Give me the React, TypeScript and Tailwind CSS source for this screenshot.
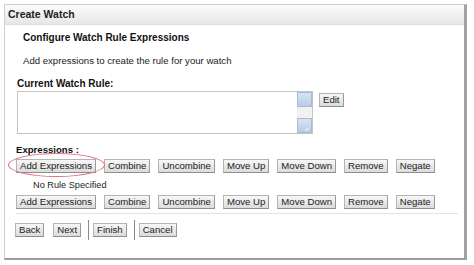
import React from "react";

const FONT = { fontFamily: '"Liberation Sans", Arial, sans-serif' };

function Btn({ label, className = "" }: { label: string; className?: string }) {
  return (
    <button
      className={`block h-[14px] shrink-0 border border-[#b4b4b4] border-b-[#8e8e8e] border-r-[#9a9a9a] bg-gradient-to-b from-[#f7f7f7] to-[#dcdcdc] px-[3px] text-[9.6px] leading-[12px] text-[#222] ${className}`}
    >
      {label}
    </button>
  );
}

const ROW = ["Add Expressions", "Combine", "Uncombine", "Move Up", "Move Down", "Remove", "Negate"];

function ButtonRow() {
  return (
    <div className="flex items-center gap-[8px]">
      {ROW.map((l) => (
        <Btn key={l} label={l} />
      ))}
    </div>
  );
}

export default function App() {
  return (
    <div className="h-[265px] w-[474px] bg-white pl-[4px] pt-[4px]" style={FONT}>
      <div className="flex h-[256px] w-[463px] flex-col border-l border-t border-[#cfcfcf] border-b-[2px] border-r-[3px] border-b-[#9c9c9c] border-r-[#a2a2a2] bg-white">
        {/* title bar */}
        <div className="flex h-[20px] shrink-0 items-center border-b border-[#dedede] bg-gradient-to-b from-[#fcfcfc] to-[#e6e6e6] pl-[3px] text-[10.5px] font-bold text-[#222]">
          Create Watch
        </div>

        <div className="pl-[18px] pt-[6px] text-[10px] font-bold leading-[14px] text-[#111]">
          Configure Watch Rule Expressions
        </div>
        <div className="pl-[18px] pt-[9px] text-[9.6px] leading-[14px] text-[#222]">
          Add expressions to create the rule for your watch
        </div>

        <div className="pl-[12px] pt-[9px] text-[10px] font-bold leading-[14px] text-[#111]">
          Current Watch Rule:
        </div>

        <div className="flex items-start pl-[12px] pt-0">
          <div className="flex h-[43px] w-[296px] border border-[#c4c4c4] bg-white">
            <div className="flex-1" />
            <div className="flex w-[15px] flex-col justify-between bg-[#f1f1f1]">
              <div className="h-[15px] border border-[#a9bad6] bg-gradient-to-b from-[#d8e3f3] to-[#b9cbe6]" />
              <div className="flex h-[15px] items-end justify-end border border-[#a9bad6] bg-gradient-to-b from-[#d8e3f3] to-[#b9cbe6] p-[2px]">
                <div className="h-[1px] w-[4px] -rotate-45 bg-white" />
              </div>
            </div>
          </div>
          <Btn label="Edit" className="ml-[6px] mt-[2px]" />
        </div>

        <div className="pl-[11px] pt-[9px] text-[9.6px] font-bold leading-[14px] text-[#111]">
          Expressions :
        </div>

        <div className="relative pl-[11px] pt-[2px]">
          <ButtonRow />
          <div className="pointer-events-none absolute left-[3px] top-[-4px] h-[24px] w-[97px] rounded-[50%] border border-[#e0707e]" />
        </div>

        <div className="pl-[28px] pt-[6px] text-[9.2px] leading-[12px] text-[#222]">No Rule Specified</div>

        <div className="pl-[11px] pt-[4px]">
          <ButtonRow />
        </div>

        <div className="ml-[11px] mt-[4px] h-px w-[442px] bg-[#e2e2e2]" />

        <div className="flex items-center pl-[10px] pt-[6px]">
          <Btn label="Back" />
          <Btn label="Next" className="ml-[9px]" />
          <div className="ml-[7px] h-[20px] w-px bg-[#8a8a8a]" />
          <Btn label="Finish" className="ml-[4px]" />
          <div className="ml-[7px] h-[20px] w-px bg-[#8a8a8a]" />
          <Btn label="Cancel" className="ml-[4px]" />
        </div>
      </div>
    </div>
  );
}
